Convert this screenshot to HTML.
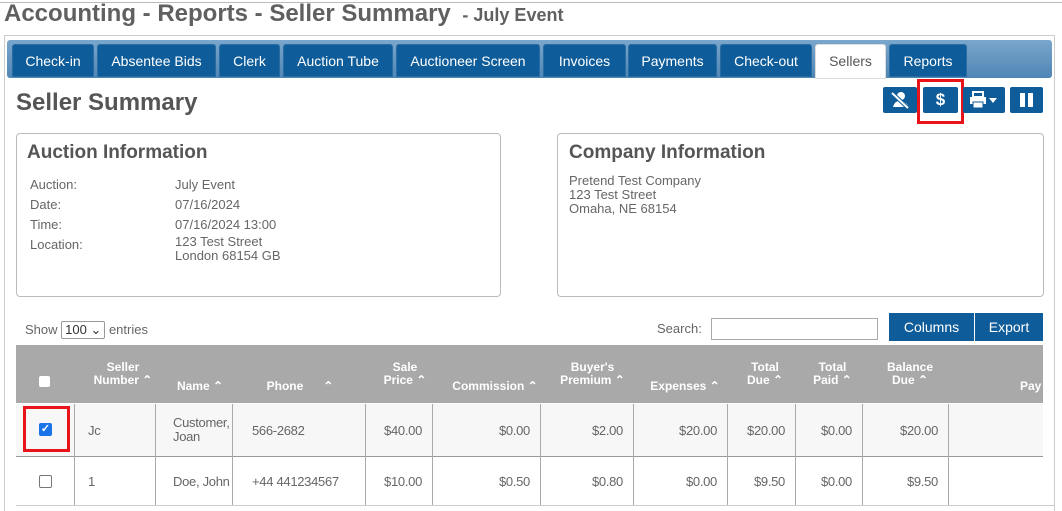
<!DOCTYPE html><html><head><style>
body{margin:0;width:1062px;height:511px;background:#fff;font-family:"Liberation Sans",sans-serif;position:relative;overflow:hidden;color:#555}
.a{position:absolute}
.tab{position:absolute;top:44px;height:33px;background:#0e5c99;color:#fff;font-size:14px;text-align:center;line-height:33px;border-radius:3px 3px 0 0;border:1px solid #2a6da3;box-sizing:border-box}
.btn{position:absolute;top:87px;height:26px;background:#0e5c99;border-radius:2px}
.lbl{font-size:13px;color:#666}
.th{position:absolute;top:345px;height:58px;color:#fff;font-weight:bold;font-size:12px;text-align:center;line-height:13px;display:flex;align-items:center;justify-content:center}
.td{position:absolute;font-size:13px;color:#666;display:flex;align-items:center;box-sizing:border-box;padding:0 10px;letter-spacing:-0.3px}
.v{position:absolute;width:1px;background:#aaa}
</style></head><body>
<div class="a" style="left:0;top:2px;width:1062px;height:1px;background:#bbb"></div>
<div class="a" style="left:4px;top:0;font-size:24px;font-weight:bold;color:#606060">Accounting - Reports - Seller Summary <span style="font-size:18px">&nbsp;- July Event</span></div>
<div class="a" style="left:4px;top:35px;width:1051px;height:476px;border:1px solid #ccc;border-bottom:none;box-sizing:border-box"></div>
<div class="a" style="left:7px;top:40px;width:1045px;height:38px;background:linear-gradient(#7aa6cc,#4f86b5);border-radius:3px"></div>
<div class="tab" style="left:12px;width:82px">Check-in</div>
<div class="tab" style="left:97px;width:119px">Absentee Bids</div>
<div class="tab" style="left:219px;width:61px">Clerk</div>
<div class="tab" style="left:283px;width:110px">Auction Tube</div>
<div class="tab" style="left:396px;width:144px">Auctioneer Screen</div>
<div class="tab" style="left:543px;width:83px">Invoices</div>
<div class="tab" style="left:628px;width:89px">Payments</div>
<div class="tab" style="left:720px;width:92px">Check-out</div>
<div class="tab" style="left:815px;width:71px;background:#fff;color:#555;height:35px;border-color:#ddd">Sellers</div>
<div class="tab" style="left:889px;width:78px">Reports</div>
<div class="a" style="left:16px;top:89px;font-size:24px;font-weight:bold;color:#555">Seller Summary</div>
<div class="btn" style="left:883px;width:34px"><svg width="34" height="26"><circle cx="18" cy="9" r="4" fill="#fff"/><path d="M10 20q2-7 8-6t8 6z" fill="#fff"/><path d="M9 6l16 15" stroke="#0e5c99" stroke-width="4"/><path d="M9 6l16 15" stroke="#fff" stroke-width="2"/></svg></div>
<div class="btn" style="left:923px;width:35px;color:#fff;font-weight:bold;font-size:17px;text-align:center;line-height:26px">$</div>
<div class="a" style="left:917px;top:79px;width:47px;height:45px;border:3px solid #e8141a;box-sizing:border-box"></div>
<div class="btn" style="left:963px;width:42px"><svg width="42" height="26"><rect x="10" y="5" width="10" height="5" fill="none" stroke="#fff" stroke-width="2"/><rect x="7" y="10" width="16" height="7" fill="#fff"/><rect x="10" y="15" width="10" height="6" fill="#fff" stroke="#0e5c99"/><path d="M26 11h8l-4 5z" fill="#fff"/></svg></div>
<div class="btn" style="left:1010px;width:33px"><svg width="33" height="26"><rect x="10" y="6" width="5" height="14" fill="#fff"/><rect x="18" y="6" width="5" height="14" fill="#fff"/></svg></div>
<div class="a" style="left:16px;top:133px;width:485px;height:164px;border:1px solid #bbb;border-radius:4px;box-sizing:border-box"></div>
<div class="a" style="left:27px;top:142px;font-size:19px;font-weight:bold;color:#555">Auction Information</div>
<div class="a lbl" style="left:30px;top:175px;line-height:20px">Auction:<br>Date:<br>Time:<br>Location:</div>
<div class="a lbl" style="left:175px;top:175px;line-height:20px">July Event<br>07/16/2024<br>07/16/2024 13:00<br><span style="line-height:14px;display:inline-block">123 Test Street<br>London 68154 GB</span></div>
<div class="a" style="left:557px;top:133px;width:487px;height:164px;border:1px solid #bbb;border-radius:4px;box-sizing:border-box"></div>
<div class="a" style="left:569px;top:142px;font-size:19px;font-weight:bold;color:#555">Company Information</div>
<div class="a lbl" style="left:569px;top:174px;line-height:14px">Pretend Test Company<br>123 Test Street<br>Omaha, NE 68154</div>
<div class="a lbl" style="left:25px;top:321px">Show <span style="display:inline-block;border:1px solid #999;border-radius:2px;padding:0 3px;color:#333">100 ⌄</span> entries</div>
<div class="a lbl" style="left:657px;top:321px">Search:</div>
<div class="a" style="left:711px;top:318px;width:167px;height:22px;border:1px solid #aaa;box-sizing:border-box"></div>
<div class="a" style="left:889px;top:313px;width:85px;height:28px;background:#0e5c99;color:#fff;font-size:14px;text-align:center;line-height:28px">Columns</div>
<div class="a" style="left:975px;top:313px;width:68px;height:28px;background:#0e5c99;color:#fff;font-size:14px;text-align:center;line-height:28px">Export</div>
<div class="a" style="left:16px;top:345px;width:1027px;height:58px;background:#a9a9a9"></div>
<div class="a" style="left:39px;top:376px;width:11px;height:11px;background:#fff;border-radius:2px"></div>
<div class="th" style="left:88px;width:70px">Seller<br>Number ⌃</div>
<div class="th" style="left:160px;width:80px;padding-top:24px;box-sizing:border-box">Name ⌃</div>
<div class="th" style="left:240px;width:120px;padding-top:24px;box-sizing:border-box">Phone &nbsp;&nbsp;&nbsp;&nbsp;&nbsp;⌃</div>
<div class="th" style="left:375px;width:60px">Sale<br>Price ⌃</div>
<div class="th" style="left:440px;width:110px;padding-top:24px;box-sizing:border-box">Commission ⌃</div>
<div class="th" style="left:550px;width:85px">Buyer's<br>Premium ⌃</div>
<div class="th" style="left:640px;width:90px;padding-top:24px;box-sizing:border-box">Expenses ⌃</div>
<div class="th" style="left:735px;width:60px">Total<br>Due ⌃</div>
<div class="th" style="left:805px;width:55px">Total<br>Paid ⌃</div>
<div class="th" style="left:870px;width:80px">Balance<br>Due ⌃</div>
<div class="th" style="left:1020px;width:30px;padding-top:24px;box-sizing:border-box;justify-content:flex-start">Pay</div>
<div class="a" style="left:16px;top:404px;width:1027px;height:53px;background:#f7f7f7"></div>
<div class="a" style="left:16px;top:456px;width:1027px;height:1px;background:#999"></div>
<div class="a" style="left:16px;top:505px;width:1038px;height:1px;background:#ccc"></div>
<div class="v" style="left:74px;top:404px;height:101px"></div><div class="v" style="left:155px;top:404px;height:101px"></div><div class="v" style="left:232px;top:404px;height:101px"></div><div class="v" style="left:365px;top:404px;height:101px"></div><div class="v" style="left:432px;top:404px;height:101px"></div><div class="v" style="left:540px;top:404px;height:101px"></div><div class="v" style="left:633px;top:404px;height:101px"></div><div class="v" style="left:727px;top:404px;height:101px"></div><div class="v" style="left:795px;top:404px;height:101px"></div><div class="v" style="left:862px;top:404px;height:101px"></div><div class="v" style="left:948px;top:404px;height:101px"></div>
<div class="a" style="left:39px;top:423px;width:13px;height:13px;background:#1a73e8;border-radius:2px;color:#fff;font-size:11px;text-align:center;line-height:13px;font-weight:bold">✓</div>
<div class="a" style="left:23px;top:406px;width:47px;height:46px;border:3px solid #e8141a;box-sizing:border-box"></div>
<div class="a" style="left:39px;top:475px;width:11px;height:11px;border:1px solid #777;border-radius:2px"></div>
<div class="td" style="left:78px;top:404px;height:52px">Jc</div>
<div class="td" style="left:163px;top:404px;height:52px;line-height:14px">Customer,<br>Joan</div>
<div class="td" style="left:242px;top:404px;height:52px">566-2682</div>
<div class="td" style="left:365px;top:404px;width:67px;height:52px;justify-content:flex-end">$40.00</div>
<div class="td" style="left:432px;top:404px;width:108px;height:52px;justify-content:flex-end">$0.00</div>
<div class="td" style="left:540px;top:404px;width:93px;height:52px;justify-content:flex-end">$2.00</div>
<div class="td" style="left:633px;top:404px;width:94px;height:52px;justify-content:flex-end">$20.00</div>
<div class="td" style="left:727px;top:404px;width:68px;height:52px;justify-content:flex-end">$20.00</div>
<div class="td" style="left:795px;top:404px;width:67px;height:52px;justify-content:flex-end">$0.00</div>
<div class="td" style="left:862px;top:404px;width:86px;height:52px;justify-content:flex-end">$20.00</div>
<div class="td" style="left:78px;top:457px;height:48px">1</div>
<div class="td" style="left:163px;top:457px;height:48px">Doe, John</div>
<div class="td" style="left:242px;top:457px;height:48px">+44 441234567</div>
<div class="td" style="left:365px;top:457px;width:67px;height:48px;justify-content:flex-end">$10.00</div>
<div class="td" style="left:432px;top:457px;width:108px;height:48px;justify-content:flex-end">$0.50</div>
<div class="td" style="left:540px;top:457px;width:93px;height:48px;justify-content:flex-end">$0.80</div>
<div class="td" style="left:633px;top:457px;width:94px;height:48px;justify-content:flex-end">$0.00</div>
<div class="td" style="left:727px;top:457px;width:68px;height:48px;justify-content:flex-end">$9.50</div>
<div class="td" style="left:795px;top:457px;width:67px;height:48px;justify-content:flex-end">$0.00</div>
<div class="td" style="left:862px;top:457px;width:86px;height:48px;justify-content:flex-end">$9.50</div>
</body></html>
